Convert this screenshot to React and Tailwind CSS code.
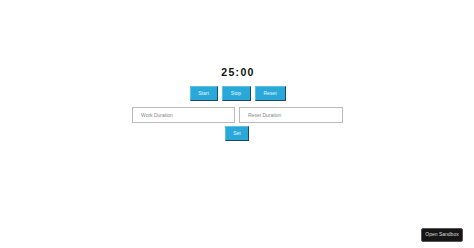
import React from 'react';

const btn =
  "h-[15px] bg-[#2ba8da] text-[#e8f6fc] text-[5px] font-normal border border-t-[#5fc0e6] border-l-[#5fc0e6] border-b-[#1c4a5c] border-r-[#1c4a5c] flex items-center justify-center";

export default function App() {
  return (
    <div className="w-[474px] h-[248px] bg-white relative" style={{ fontFamily: '"Liberation Sans", Arial, sans-serif' }}>
      <div className="flex flex-col items-center pt-[66px]">
        {/* Timer */}
        <div className="text-[10.5px] font-bold text-[#111] tracking-[1.3px] leading-[12px] ml-[2px]">
          25:00
        </div>

        {/* Controls */}
        <div className="flex gap-[4px] mt-[8px] ml-[1px]">
          <button className={`${btn} w-[28px]`}>Start</button>
          <button className={`${btn} w-[29px]`}>Stop</button>
          <button className={`${btn} w-[31px]`}>Reset</button>
        </div>

        {/* Inputs */}
        <div className="flex gap-[4px] mt-[6px] ml-[1px]">
          <input
            className="w-[103px] h-[16px] border border-[#bbbbbb] px-[8px] text-[5px] text-[#555] placeholder:text-[#888] outline-none"
            placeholder="Work Duration"
          />
          <input
            className="w-[104px] h-[16px] border border-[#bbbbbb] px-[8px] text-[5px] text-[#555] placeholder:text-[#888] outline-none"
            placeholder="Reset Duration"
          />
        </div>

        <button className={`${btn} w-[24px] mt-[3px] h-[15px]`}>Set</button>
      </div>

      <div className="absolute left-[421px] top-[228px] w-[42px] h-[14px] bg-[#151515] border border-[#555] rounded-[2px] text-[#ddd] text-[5px] flex items-center justify-center">
        Open Sandbox
      </div>
    </div>
  );
}
